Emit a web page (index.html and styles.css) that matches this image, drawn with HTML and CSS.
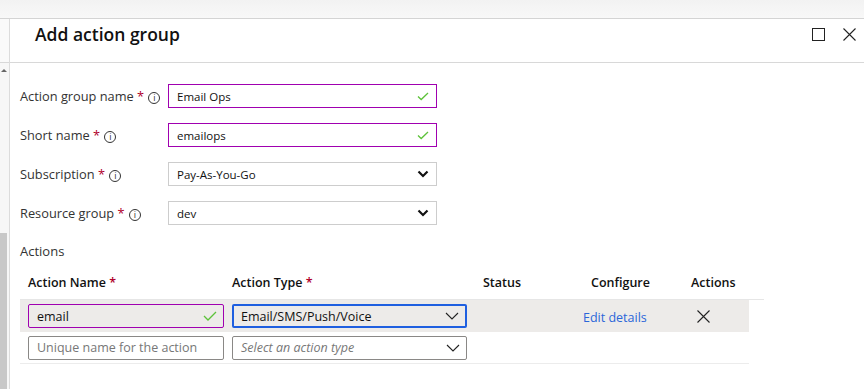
FILE: index.html
```html
<!DOCTYPE html>
<html>
<head>
<meta charset="utf-8">
<link rel="stylesheet" href="styles.css">
</head>
<body>
<div class="topbar"></div>
<div class="main">
  <div class="leftstrip">
    <div class="ls-head"></div>
    <div class="ls-arrow"></div>
    <div class="ls-track"><div class="ls-thumb"></div></div>
  </div>
  <div class="blade">
    <div class="header">
      <h1 class="title">Add action group</h1>
      <div class="hicons">
        <svg width="13" height="13" viewBox="0 0 13 13"><rect x="0.5" y="0.5" width="12" height="12" fill="none" stroke="#222" stroke-width="1"/></svg>
        <svg width="13" height="13" viewBox="0 0 13 13"><path d="M0.5 0.5 L12.5 12.5 M12.5 0.5 L0.5 12.5" stroke="#222" stroke-width="1.1"/></svg>
      </div>
    </div>
    <div class="form">
      <div class="frow">
        <div class="label">Action group name <span class="req">*</span> <span class="info">i</span></div>
        <div class="field valid"><span class="val">Email Ops</span><svg class="check" width="12" height="9" viewBox="0 0 12 9"><path d="M1 4.5 L4.2 7.5 L11 1" fill="none" stroke="#5dc23a" stroke-width="1.3"/></svg></div>
      </div>
      <div class="frow">
        <div class="label">Short name <span class="req">*</span> <span class="info">i</span></div>
        <div class="field valid"><span class="val">emailops</span><svg class="check" width="12" height="9" viewBox="0 0 12 9"><path d="M1 4.5 L4.2 7.5 L11 1" fill="none" stroke="#5dc23a" stroke-width="1.3"/></svg></div>
      </div>
      <div class="frow">
        <div class="label">Subscription <span class="req">*</span> <span class="info">i</span></div>
        <div class="field select"><span class="val">Pay-As-You-Go</span><svg class="chev" width="12" height="8" viewBox="0 0 12 8"><path d="M1.5 1.5 L6 6 L10.5 1.5" fill="none" stroke="#111" stroke-width="2.2"/></svg></div>
      </div>
      <div class="frow">
        <div class="label">Resource group <span class="req">*</span> <span class="info">i</span></div>
        <div class="field select"><span class="val">dev</span><svg class="chev" width="12" height="8" viewBox="0 0 12 8"><path d="M1.5 1.5 L6 6 L10.5 1.5" fill="none" stroke="#111" stroke-width="2.2"/></svg></div>
      </div>
      <div class="section">Actions</div>
      <div class="table">
        <div class="thead">
          <div class="c1">Action Name <span class="req">*</span></div>
          <div class="c2">Action Type <span class="req">*</span></div>
          <div class="c3">Status</div>
          <div class="c4">Configure</div>
          <div class="c5">Actions</div>
        </div>
        <div class="trow active">
          <div class="c1"><div class="tin valid"><span class="val">email</span><svg class="check" width="14" height="10" viewBox="0 0 14 10"><path d="M1 5 L5 9 L13 1" fill="none" stroke="#5dc23a" stroke-width="1.3"/></svg></div></div>
          <div class="c2"><div class="tin focus"><span class="val">Email/SMS/Push/Voice</span><svg class="tchev" width="14" height="8" viewBox="0 0 14 8"><path d="M1 1 L7 7 L13 1" fill="none" stroke="#222" stroke-width="1.1"/></svg></div></div>
          <div class="c3"></div>
          <div class="c4"><a class="link">Edit details</a></div>
          <div class="c5"><svg width="13" height="13" viewBox="0 0 13 13"><path d="M0.5 0.5 L12.5 12.5 M12.5 0.5 L0.5 12.5" stroke="#222" stroke-width="1.1"/></svg></div>
        </div>
        <div class="trow last">
          <div class="c1"><div class="tin plain"><span class="ph">Unique name for the action</span></div></div>
          <div class="c2"><div class="tin plain"><span class="ph italic">Select an action type</span><svg class="tchev" width="14" height="8" viewBox="0 0 14 8"><path d="M1 1 L7 7 L13 1" fill="none" stroke="#222" stroke-width="1.1"/></svg></div></div>
          <div class="c3"></div>
          <div class="c4"></div>
          <div class="c5"></div>
        </div>
      </div>
    </div>
  </div>
</div>
</body>
</html>
```
FILE: styles.css
```css
* { box-sizing: border-box; }
html, body { margin: 0; padding: 0; }
body {
  width: 864px;
  height: 389px;
  overflow: hidden;
  background: #fff;
  font-family: "Open Sans", "Noto Sans", sans-serif;
  color: #222;
}
.topbar {
  height: 19px;
  background: linear-gradient(#f2f2f2, #f8f8f8);
  border-bottom: 1px solid #d4d4d4;
}
.main {
  display: flex;
  height: 370px;
}
.leftstrip {
  width: 10px;
  flex-shrink: 0;
  border-right: 1px solid #dcdcdc;
  background: #f7f7f7;
  display: flex;
  flex-direction: column;
}
.ls-head {
  height: 44px;
  flex-shrink: 0;
  border-bottom: 1px solid #d8d8d8;
  background: #fafafa;
}
.ls-arrow {
  flex-shrink: 0;
  margin: 6px 0 0 1px;
  width: 0; height: 0;
  border-left: 3px solid transparent;
  border-right: 3px solid transparent;
  border-bottom: 3px solid #666;
}
.ls-track { flex: 1; padding-top: 161px; min-height: 0; overflow: hidden; }
.ls-thumb { width: 7px; height: 200px; background: #c8c8c8; }
.blade { flex: 1; }
.header {
  height: 44px;
  border-bottom: 1px solid #d8d8d8;
  display: flex;
  align-items: center;
  justify-content: space-between;
  padding: 0 8px 0 25px;
}
.title {
  margin: 0;
  font-size: 17.5px;
  font-weight: 600;
  color: #111;
  padding-bottom: 14px;
}
.hicons {
  display: flex;
  gap: 18px;
  padding-bottom: 13px;
}
.form { padding: 21px 0 0 10px; }
.frow {
  display: flex;
  align-items: center;
  height: 24px;
  margin-bottom: 15px;
}
.label {
  width: 148px;
  font-size: 12.8px;
  color: #333;
  white-space: nowrap;
}
.req { color: #b0002a; }
.info {
  display: inline-block;
  width: 12px; height: 12px;
  border: 1px solid #333;
  border-radius: 50%;
  font-size: 9px;
  line-height: 10px;
  text-align: center;
  vertical-align: 0;
  color: #333;
  margin-left: 1px;
}
.field {
  width: 269px;
  height: 24px;
  display: flex;
  align-items: center;
  justify-content: space-between;
  padding: 0 7px 0 8px;
  font-size: 11.5px;
  color: #111;
}
.field.valid { border: 1px solid #a000b0; }
.field.select { border: 1px solid #cdcdcd; }
.section {
  font-size: 13px;
  line-height: 17px;
  color: #333;
  margin-top: 18px;
  height: 22px;
}
.table { width: 744px; }
.thead {
  display: flex;
  align-items: center;
  height: 35px;
  line-height: 17px;
  border-bottom: 1px solid #e6e6e6;
  font-size: 12.5px;
  font-weight: 600;
  color: #111;
  padding-left: 8px;
}
.trow {
  display: flex;
  align-items: center;
  width: 729px;
  padding-left: 8px;
}
.trow.active { background: #edebe9; height: 32px; }
.trow.last { height: 32px; border-bottom: 1px solid #ececec; }
.c1 { width: 204px; }
.c2 { width: 235px; }
.thead .c3 { padding-left: 16px; width: 124px; }
.trow .c3 { width: 116px; }
.thead .c4 { width: 100px; }
.trow .c4 { width: 108px; }
.trow .c5 { padding-left: 6px; display: flex; }
.tin {
  height: 24px;
  display: flex;
  align-items: center;
  justify-content: space-between;
  padding: 0 6px 0 8px;
  font-size: 12.5px;
  color: #111;
}
.c1 .tin { width: 196px; }
.c2 .tin { width: 235px; }
.tin.valid { border: 1px solid #a000b0; border-radius: 2px; }
.tin.focus { border: 2px solid #1f5fe0; border-radius: 2px; padding-left: 7px; }
.tin.plain { border: 1px solid #8a8886; border-radius: 2px; }
.ph { color: #777; }
.italic { font-style: italic; }
.link { color: #2b66d9; font-size: 12.5px; }
```
